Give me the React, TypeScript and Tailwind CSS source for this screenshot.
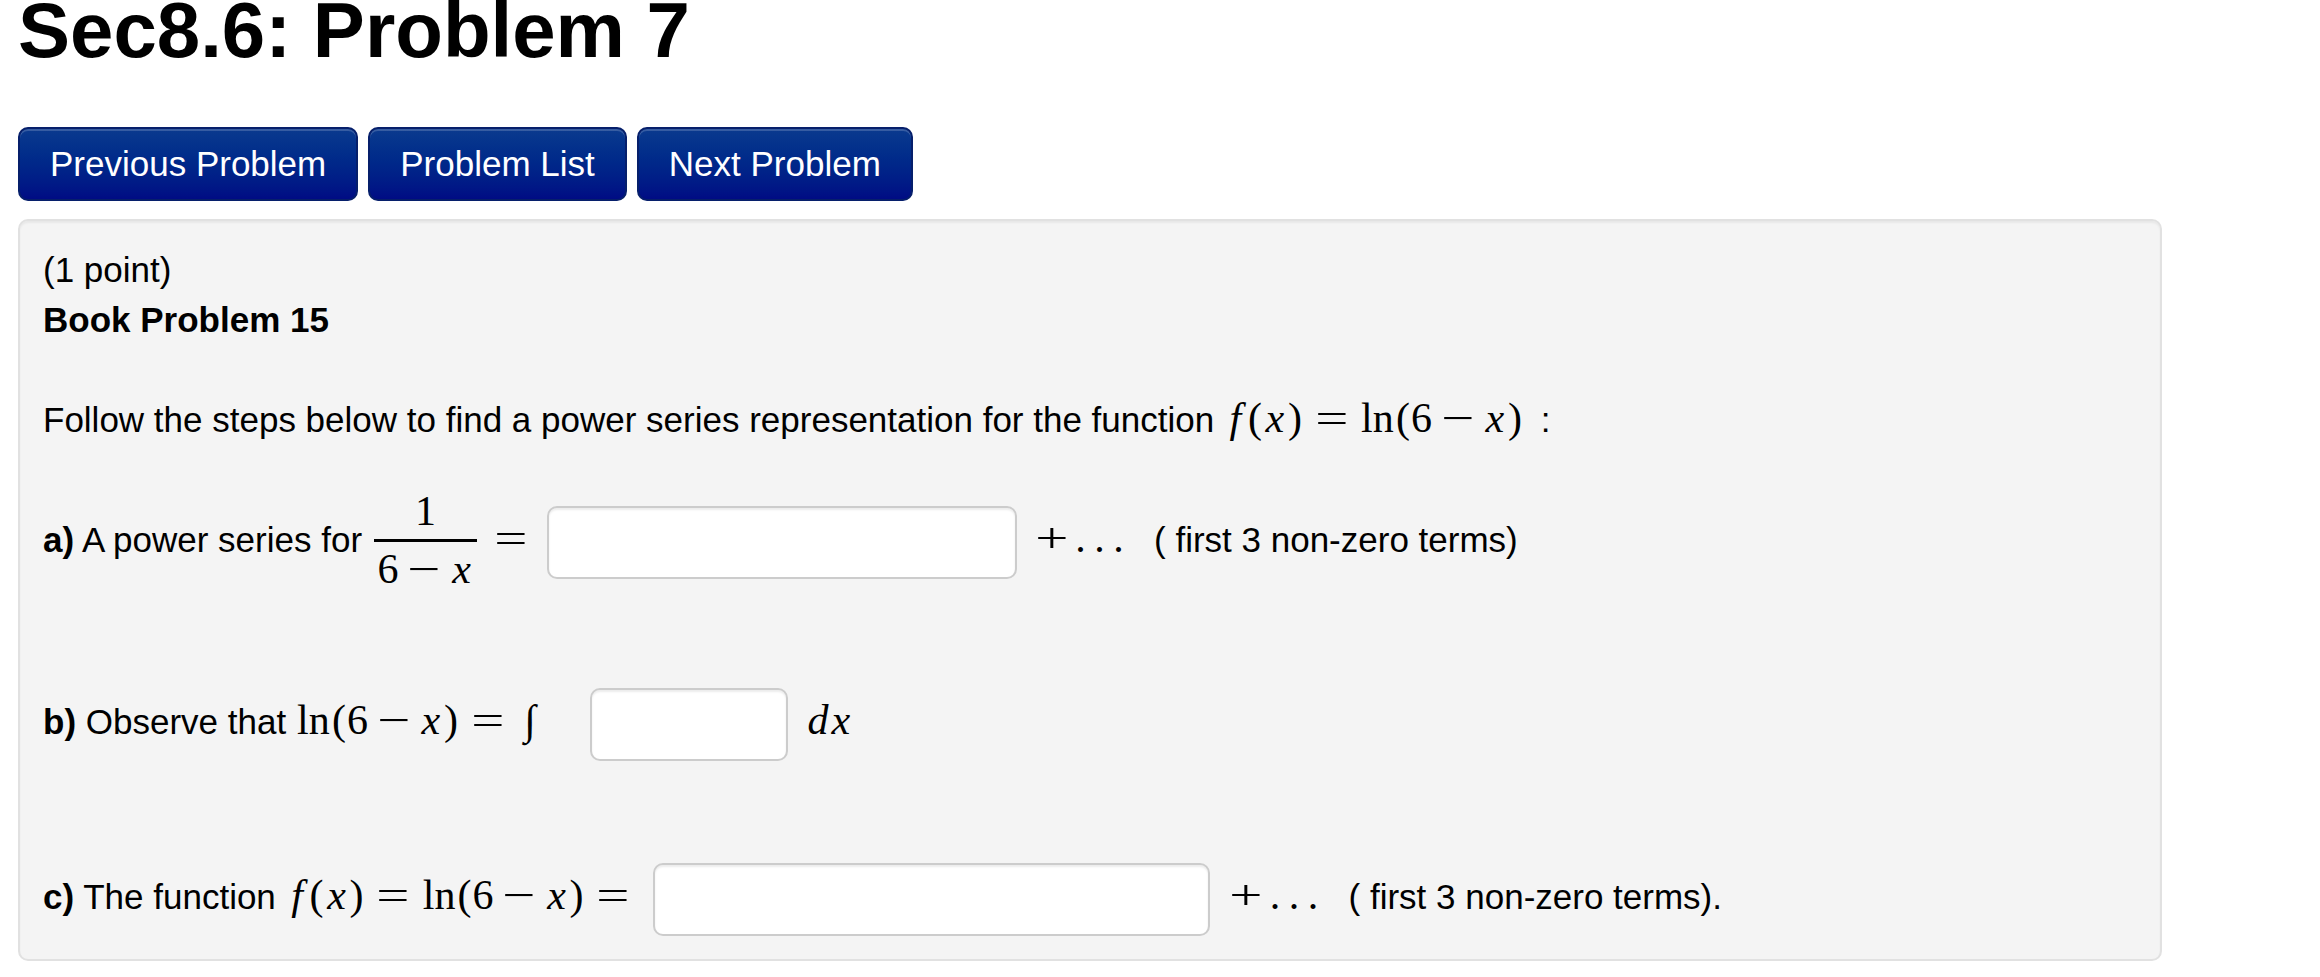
// WeBWorK problem page: header, nav buttons and the problem well
// with three answer rows (a, b, c).

const mathFont = "font-['Liberation_Serif','Times_New_Roman',serif] text-[42px]";

function Var({ children, className = "w-[24px]" }: { children: React.ReactNode; className?: string }) {
  return <span className={`inline-block text-center italic ${className}`}>{children}</span>;
}

function Sym({ children, className = "w-[16px]" }: { children: React.ReactNode; className?: string }) {
  return <span className={`inline-block text-center ${className}`}>{children}</span>;
}

function Rel({ children }: { children: React.ReactNode }) {
  return (
    <span className="mx-[12px] inline-block w-[33px] text-center">
      <span className="inline-block scale-x-[1.4]">{children}</span>
    </span>
  );
}

function Bin({ children }: { children: React.ReactNode }) {
  return (
    <span className="mx-[9px] inline-block w-[33px] text-center">
      <span className="inline-block scale-x-[1.4]">{children}</span>
    </span>
  );
}

function LnSixMinusX() {
  return (
    <>
      <Sym className="w-[35px]">ln</Sym>
      <Sym>(</Sym>
      <Sym className="w-[21px]">6</Sym>
      <Bin>−</Bin>
      <Var>x</Var>
      <Sym>)</Sym>
    </>
  );
}

function FxEq() {
  return (
    <>
      <Var className="w-[23px]">f</Var>
      <Sym>(</Sym>
      <Var>x</Var>
      <Sym>)</Sym>
      <Rel>=</Rel>
      <LnSixMinusX />
    </>
  );
}

function PlusDots() {
  return (
    <span className={`${mathFont} leading-[44px]`}>
      <span className="inline-block w-[33px] text-center">
        <span className="inline-block scale-x-[1.4]">+</span>
      </span>
      <span className="ml-[3px] inline-block w-[19px] text-center">.</span>
      <span className="inline-block w-[19px] text-center">.</span>
      <span className="inline-block w-[19px] text-center">.</span>
    </span>
  );
}

function AnswerBox({ className }: { className: string }) {
  return (
    <input
      type="text"
      readOnly
      className={`h-[73px] shrink-0 rounded-[10px] border-2 border-[#cccccc] bg-white shadow-[inset_0_2px_2px_rgba(0,0,0,0.075)] outline-none ${className}`}
    />
  );
}

function NavButton({ children }: { children: React.ReactNode }) {
  return (
    <button className="flex h-[74px] items-center rounded-[10px] border-2 border-[#061f6b] bg-linear-to-b from-[#0b3a8e] to-[#000b84] px-[30px] text-[35px] text-white shadow-[inset_0_2px_0_rgba(255,255,255,0.18)]">
      {children}
    </button>
  );
}

export default function App() {
  return (
    <div className="min-h-screen overflow-hidden bg-white pl-[18px] font-['Liberation_Sans',Arial,sans-serif] text-black">
      <h1 className="-mt-[9px] text-[78px] leading-[78px] font-bold">Sec8.6: Problem 7</h1>

      <div className="mt-[58px] flex gap-[10px]">
        <NavButton>Previous Problem</NavButton>
        <NavButton>Problem List</NavButton>
        <NavButton>Next Problem</NavButton>
      </div>

      <div className="mt-[18px] w-[2144px] rounded-[10px] border-2 border-[#e1e1e1] bg-[#f4f4f4] pt-[24px] pb-[23px] pl-[23px] text-[35px] leading-[50px] shadow-[inset_0_2px_2px_rgba(0,0,0,0.05)]">
        <div>(1 point)</div>
        <div className="font-bold">Book Problem 15</div>
        <div className="h-[50px]" />
        <div>
          Follow the steps below to find a power series representation for the function{" "}
          <span className={`${mathFont} leading-[44px]`}>
            <FxEq />
          </span>
          <span className="ml-[8px]"> :</span>
        </div>

        {/* a) */}
        <div className="mt-[45px] flex items-center">
          <span className="pb-[6px]">
            <b>a)</b> A power series for
          </span>
          <span className={`${mathFont} ml-[12px] inline-flex w-[103px] flex-col items-center pb-[5px]`}>
            <span className="leading-[42px]">1</span>
            <span className="mt-[7px] h-[3px] w-full bg-black" />
            <span className="mt-[6px] leading-[42px]">
              <Sym className="w-[21px]">6</Sym>
              <Bin>−</Bin>
              <Var>x</Var>
            </span>
          </span>
          <span className="ml-[5px] pb-[6px]">
            <span className={`${mathFont} leading-[44px]`}>
              <Rel>=</Rel>
            </span>
          </span>
          <AnswerBox className="ml-[8px] w-[470px]" />
          <span className="ml-[18px] pb-[6px]">
            <PlusDots />
            <span className="ml-[26px]">( first 3 non-zero terms)</span>
          </span>
        </div>

        {/* b) */}
        <div className="mt-[93px] flex items-center">
          <span className="pb-[6px]">
            <b>b)</b> Observe that{" "}
            <span className={`${mathFont} leading-[44px]`}>
              <LnSixMinusX />
              <Rel>=</Rel>
              <span className="inline-block w-[28px] text-center italic">∫</span>
            </span>
          </span>
          <AnswerBox className="ml-[46px] w-[198px]" />
          <span className="ml-[19px] pb-[6px]">
            <span className={`${mathFont} leading-[44px]`}>
              <Var className="w-[22px]">d</Var>
              <Var>x</Var>
            </span>
          </span>
        </div>

        {/* c) */}
        <div className="mt-[102px] flex items-center">
          <span className="pb-[6px]">
            <b>c)</b> The function{" "}
            <span className={`${mathFont} leading-[44px]`}>
              <FxEq />
              <Rel>=</Rel>
            </span>
          </span>
          <AnswerBox className="ml-[11px] w-[557px]" />
          <span className="ml-[20px] pb-[6px]">
            <PlusDots />
            <span className="ml-[26px]">( first 3 non-zero terms).</span>
          </span>
        </div>
      </div>
    </div>
  );
}
